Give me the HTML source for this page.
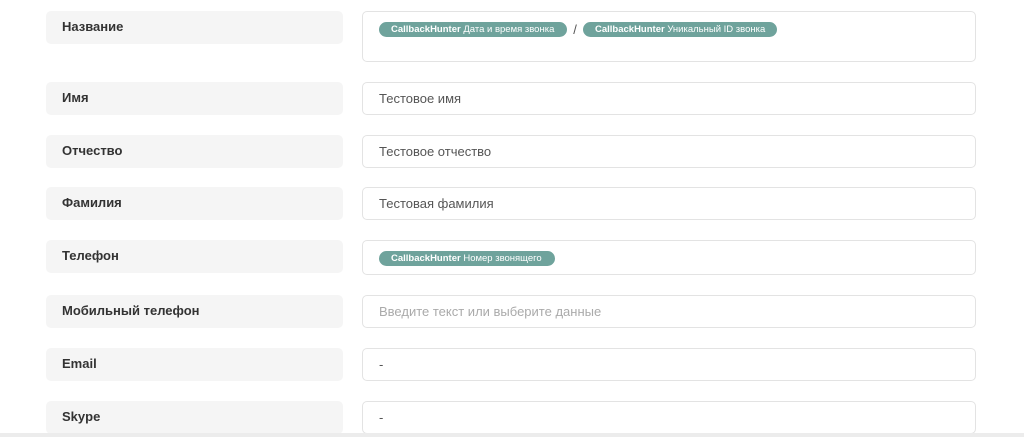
<!DOCTYPE html>
<html><head><meta charset="utf-8"><style>
body{margin:0;width:1024px;height:437px;background:#fff;font-family:"Liberation Sans",sans-serif;position:relative;overflow:hidden}
.l{position:absolute;left:46px;width:297px;height:33px;background:#f5f5f5;border-radius:5px;font-weight:bold;font-size:13px;color:#333;line-height:31px;box-sizing:border-box;padding-left:16px}
.i{position:absolute;left:362px;width:614px;height:33px;border:1px solid #e3e3e3;border-radius:5px;box-sizing:border-box;font-size:13px;color:#555;line-height:31px;padding-left:16px}
.p{display:inline-block;background:#6fa39c;color:#fff;border-radius:8px;height:15px;line-height:15px;font-size:9.5px;padding:0 9px 0 12px;vertical-align:top}
.p b{font-size:9.5px}
</style></head><body>
<div class="l" style="top:11px">Название</div>
<div class="i" style="top:11px;height:51px;padding-top:10px;line-height:15px"><span class="p" style="width:167px"><b>CallbackHunter</b> Дата и время звонка</span><span style="display:inline-block;width:16px;text-align:center;color:#555">/</span><span class="p" style="width:173px"><b>CallbackHunter</b> Уникальный ID звонка</span></div>
<div class="l" style="top:82px">Имя</div><div class="i" style="top:82px">Тестовое имя</div>
<div class="l" style="top:135px">Отчество</div><div class="i" style="top:135px">Тестовое отчество</div>
<div class="l" style="top:187px">Фамилия</div><div class="i" style="top:187px">Тестовая фамилия</div>
<div class="l" style="top:240px">Телефон</div><div class="i" style="top:240px;height:35px;padding-top:10px;line-height:15px"><span class="p" style="width:155px"><b>CallbackHunter</b> Номер звонящего</span></div>
<div class="l" style="top:295px">Мобильный телефон</div><div class="i" style="top:295px;color:#aaa">Введите текст или выберите данные</div>
<div class="l" style="top:348px">Email</div><div class="i" style="top:348px">-</div>
<div class="l" style="top:401px">Skype</div><div class="i" style="top:401px">-</div>
<div style="position:absolute;left:0;top:433px;width:1024px;height:4px;background:#ececec"></div>
</body></html>
